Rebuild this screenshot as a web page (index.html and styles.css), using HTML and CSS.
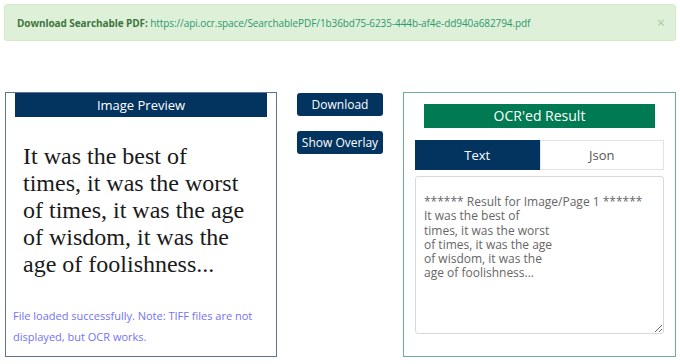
FILE: index.html
```html
<!DOCTYPE html>
<html lang="en">
<head>
  <meta charset="UTF-8">
  <meta name="viewport" content="width=device-width, initial-scale=1.0">
  <title>OCR Result</title>
  <link rel="stylesheet" href="styles.css">
</head>
<body>
  <div class="alert">
    <span><b>Download Searchable PDF:</b> <a href="#">https://api.ocr.space/SearchablePDF/1b36bd75-6235-444b-af4e-dd940a682794.pdf</a></span>
    <span class="close">&times;</span>
  </div>

  <div class="row">
    <div class="panel preview">
      <div class="bar">Image Preview</div>
      <div class="sample">It was the best of<br>times, it was the worst<br>of times, it was the age<br>of wisdom, it was the<br>age of foolishness...</div>
      <p class="status">File loaded successfully. Note: TIFF files are not displayed, but OCR works.</p>
    </div>

    <div class="actions">
      <button>Download</button>
      <button>Show Overlay</button>
    </div>

    <div class="panel result">
      <div class="bar green">OCR'ed Result</div>
      <div class="tabs">
        <div class="tab active">Text</div>
        <div class="tab">Json</div>
      </div>
      <textarea class="output">****** Result for Image/Page 1 ******
It was the best of
times, it was the worst
of times, it was the age
of wisdom, it was the
age of foolishness...</textarea>
    </div>
  </div>
</body>
</html>
```

FILE: styles.css
```css
body {
  margin: 0;
  padding: 4px;
  font-family: "Open Sans", sans-serif;
  background: #fff;
}

.alert {
  display: flex;
  justify-content: space-between;
  align-items: center;
  height: 37px;
  padding: 0 12px;
  background-color: #dff0d8;
  border: 1px solid #d6e9c6;
  border-radius: 3px;
  box-sizing: border-box;
  font-size: 10px;
  letter-spacing: -0.08px;
  color: #3c763d;
}

.alert a {
  color: #2a9a6e;
  text-decoration: none;
}

.close {
  color: #a9c9a4;
  font-size: 14px;
  margin-right: -2px;
}

.row {
  display: flex;
  align-items: flex-start;
  margin-top: 51px;
  padding-left: 1px;
}

.panel {
  box-sizing: border-box;
  height: 265px;
}

.preview {
  width: 272px;
  border: 1px solid #5f7493;
  padding: 0 9px;
}

.bar {
  height: 24px;
  line-height: 24px;
  background-color: #03345f;
  color: #fff;
  text-align: center;
  font-size: 13px;
}

.sample {
  font-family: "Liberation Serif", serif;
  font-size: 24px;
  line-height: 27px;
  color: #1a1a1a;
  margin: 26px 0 0 8px;
}

.status {
  margin: 27px 0 0 -2px;
  font-size: 11px;
  line-height: 21px;
  color: #7373f4;
}

.actions {
  display: flex;
  flex-direction: column;
  gap: 15px;
  width: 86px;
  margin: 1px 20px 0 20px;
}

.actions button {
  height: 23px;
  padding: 0;
  border: 0;
  border-radius: 3px;
  background-color: #03345f;
  color: #fff;
  font-family: "Open Sans", sans-serif;
  font-size: 12px;
}

.result {
  width: 273px;
  border: 1px solid #6dae94;
  padding: 11px 11px 0;
}

.bar.green {
  background-color: #007a52;
  margin: 0 9px;
  font-size: 14px;
}

.tabs {
  display: flex;
  margin-top: 12px;
  height: 30px;
}

.tab {
  flex: 1;
  line-height: 28px;
  text-align: center;
  font-size: 13px;
  color: #555;
  border: 1px solid #e3e3e3;
}

.tab.active {
  background-color: #03345f;
  border-color: #03345f;
  color: #fff;
}

.output {
  display: block;
  width: 100%;
  height: 158px;
  margin-top: 6px;
  box-sizing: border-box;
  padding: 18px 8px 6px;
  border: 1px solid #d9d9d9;
  border-radius: 3px;
  font-family: "Open Sans", sans-serif;
  font-size: 12px;
  line-height: 14.3px;
  color: #666;
  resize: vertical;
}
```
